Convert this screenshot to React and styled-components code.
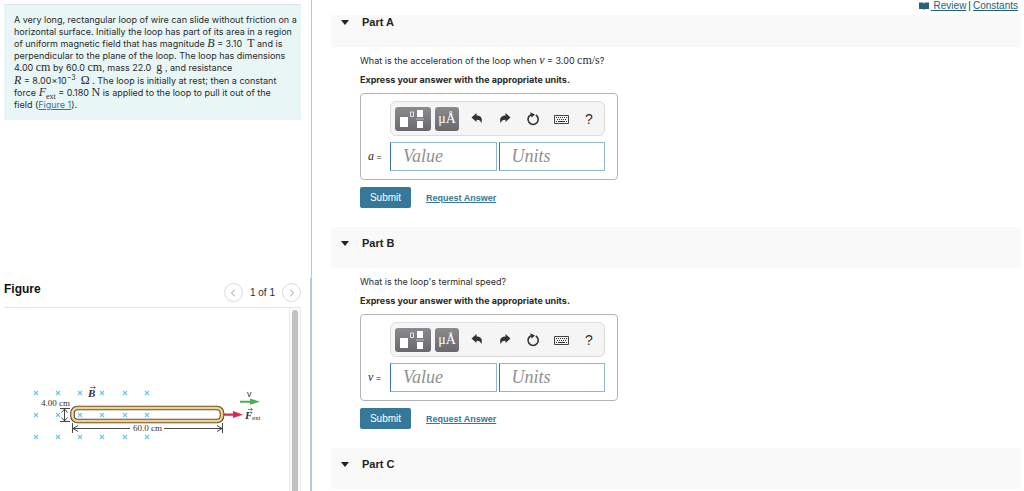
import React from "react";
import styled, { createGlobalStyle } from "styled-components";
import { ChevronLeft, ChevronRight } from "lucide-react";

const GlobalStyle = createGlobalStyle`
  * {
    box-sizing: border-box;
  }
  body {
    margin: 0;
    background: #fff;
    color: #2a2a2a;
    font-family: "Liberation Sans", Arial, sans-serif;
    font-size: 9px;
  }
`;

const Page = styled.div`
  display: flex;
  height: 100vh;
  overflow: hidden;
`;

const Sidebar = styled.aside`
  display: flex;
  flex-direction: column;
  flex: 0 0 312px;
  min-width: 0;
`;

const ProblemPane = styled.div`
  flex: 1;
  padding: 4px 10px 0 4px;
  border-right: 1px solid #bfc6d0;
`;

const Problem = styled.div`
  padding: 9px 0 9px 10px;
  background: #e8f6f6;
  border-top: 1px solid #dde5e5;
  font-family: Inter, "Liberation Sans", sans-serif;
  line-height: 12px;
  white-space: nowrap;
`;

const Math = styled.span`
  font-family: "Liberation Serif", "Times New Roman", serif;
  font-size: 12px;
  line-height: 10px;
  font-style: ${({ $italic }) => ($italic ? "italic" : "normal")};
`;

const Sup = styled.sup`
  font-size: 7px;
  line-height: 7px;
`;

const Sub = styled.sub`
  font-family: "Liberation Serif", "Times New Roman", serif;
  font-size: 8px;
  line-height: 0;
`;

const Link = styled.a`
  color: #367899;
  text-decoration: underline;
  font-weight: ${({ $bold }) => ($bold ? "bold" : "normal")};
`;

const FigurePane = styled.section`
  display: flex;
  flex-direction: column;
  flex: 0 0 213px;
  padding: 0 9px 0 4px;
  border-right: 2px solid #b9cadf;
`;

const FigureHeader = styled.header`
  display: flex;
  align-items: center;
  height: 30px;
  border-bottom: 1px solid #e6e6e6;
`;

const FigureTitle = styled.h2`
  flex: 1;
  margin: 0;
  padding-bottom: 7px;
  color: #111;
  font-size: 12px;
`;

const Pager = styled.div`
  display: flex;
  align-items: center;
  gap: 7px;
  font-size: 10px;
`;

const PagerButton = styled.button`
  display: flex;
  align-items: center;
  justify-content: center;
  width: 19px;
  height: 19px;
  padding: 0;
  border: 1px solid #dcdcdc;
  border-radius: 50%;
  background: #fff;
  color: #999;
`;

const FigureBody = styled.div`
  display: flex;
  justify-content: space-between;
  flex: 1;
  min-height: 0;
`;

const ScrollTrack = styled.div`
  flex: 0 0 11px;
  padding: 2px 2px 0;
  border-left: 1px solid #e8e8e8;
  border-right: 1px solid #ececec;
  background: #fafafa;
`;

const ScrollThumb = styled.div`
  width: 6px;
  height: 100%;
  border-radius: 3px 3px 0 0;
  background: #c1c1c1;
`;

const Main = styled.main`
  flex: 1;
  min-width: 0;
  padding: 0 3px 0 19px;
`;

const TopBar = styled.nav`
  display: flex;
  align-items: center;
  justify-content: flex-end;
  height: 15px;
  padding: 0 3px 4px 0;
  gap: 2px;
  font-size: 10px;

  a {
    color: #26607a;
  }
`;

const PartHeader = styled.header`
  display: flex;
  align-items: center;
  gap: 13px;
  height: ${({ $first }) => ($first ? "32px" : "41px")};
  padding: 0 10px ${({ $first }) => ($first ? "17px" : "8px")};
  background: #f9f9f9;
`;

const Caret = styled.span`
  border: 4px solid transparent;
  border-top: 5px solid #222;
  border-bottom: 0;
`;

const PartTitle = styled.h3`
  margin: 0;
  color: #222;
  font-size: 11px;
  line-height: 13px;
`;

const PartBody = styled.form`
  padding: 4px 0 19px 29px;
`;

const Question = styled.p`
  margin: 0;
  font-family: Inter, "Liberation Sans", sans-serif;
  line-height: 19px;
  font-weight: ${({ $bold }) => ($bold ? "bold" : "normal")};
`;

const AnswerBox = styled.div`
  display: flex;
  flex-direction: column;
  gap: 6px;
  width: 258px;
  height: 87px;
  margin-top: 4px;
  padding: 7px 12px 8px 7px;
  border: 1px solid #b4b4b4;
  border-radius: 4px;
`;

const Toolbar = styled.div`
  display: flex;
  align-items: center;
  height: 35px;
  margin-left: 22px;
  padding: 0 4px;
  border: 1px solid #dcdcdc;
  border-radius: 6px;
  background: #f5f5f5;
`;

const TemplateButton = styled.button`
  display: flex;
  align-items: center;
  justify-content: center;
  flex: 0 0 ${({ $wide }) => ($wide ? "36px" : "24px")};
  height: 24px;
  margin-right: 4px;
  padding: 0;
  border: 0;
  border-radius: 3px;
  background: linear-gradient(#8b8b8f, #69696d);
  color: #fff;
  font-family: "Liberation Serif", serif;
  font-size: 14px;
`;

const IconButton = styled.button`
  display: flex;
  align-items: center;
  justify-content: center;
  flex: 0 0 28px;
  height: 24px;
  padding: 0;
  border: 0;
  background: none;
  color: #333;
  font-family: "Liberation Sans", Arial, sans-serif;
  font-size: 14px;
`;

const Fields = styled.div`
  display: flex;
  align-items: center;
  gap: 2px;
`;

const Label = styled.label`
  width: 20px;
  white-space: nowrap;
`;

const Field = styled.input`
  flex: 1;
  min-width: 0;
  height: 29px;
  padding: 0 12px;
  border: 1px solid #8fb8ca;
  border-left-color: #367899;
  outline: 0;
  border-radius: 0;
  background: #fff;
  font-family: "Liberation Serif", "Times New Roman", serif;
  font-size: 18px;
  font-style: italic;

  &::placeholder {
    color: #909090;
  }
`;

const Actions = styled.div`
  display: flex;
  align-items: center;
  gap: 15px;
  margin-top: 7px;
`;

const Submit = styled.button`
  width: 51px;
  height: 21px;
  padding: 0;
  border: 0;
  border-radius: 2px;
  background: #367899;
  color: #fff;
  font-family: "Liberation Sans", Arial, sans-serif;
  font-size: 10px;
`;

const BookIcon = () => (
  <svg width="10" height="8" viewBox="0 0 10 8" fill="#26607a">
    <path d="M0 0.5h4.5v6.5H0zM5.5 0.5H10v6.5H5.5zM4.5 1.5h1V8h-1z" />
  </svg>
);

const FractionIcon = () => (
  <svg width="26" height="18" viewBox="0 0 26 18">
    <path d="M0 7h8v10H0zM17 0h6v7h-6zM17 11h6v7h-6z" fill="#fff" />
    <path d="M10.500 2h3v4.500h-3z" fill="none" stroke="#e4e4e4" />
    <path d="M16 9h8" stroke="#bdbdbd" />
  </svg>
);

const ArrowIcon = ({ flip }) => (
  <svg width="12" height="11" viewBox="0 0 12 11" fill="currentColor">
    <path
      transform={flip ? "translate(12 0) scale(-1 1)" : undefined}
      d="M0.500 4.500L5.500 0V2.500C9.800 2.500 12 5 10.300 10.300C9.700 7.800 8.500 6.700 5.500 6.700V9Z"
    />
  </svg>
);

const ResetIcon = () => (
  <svg width="14" height="14" viewBox="0 0 14 14">
    <path d="M9.800 3A5.100 5.100 0 1 1 5 2.700" fill="none" stroke="currentColor" strokeWidth="1.600" />
    <path d="M4.200 0.300L9 2.400L5.600 5.400Z" fill="currentColor" />
  </svg>
);

const KeyboardIcon = () => (
  <svg width="15" height="10" viewBox="0 0 15 10" fill="none" stroke="currentColor">
    <path d="M0.500 1.500h14v8H0.500z" stroke="#444" />
    <path d="M2 3.500h11M3 5.500h10" strokeDasharray="1 1" />
    <path d="M2 7.500h1M4 7.500h7M12 7.500h1" />
  </svg>
);

const FigureText = styled.text`
  font-family: "Liberation Serif", "Times New Roman", serif;
  font-size: ${({ $italic }) => ($italic ? "11px" : "9px")};
  font-style: ${({ $italic }) => ($italic ? "italic" : "normal")};
  font-weight: ${({ $italic }) => ($italic ? "bold" : "normal")};
  fill: #333;
`;

const SmallText = styled(FigureText)`
  font-size: 7px;
`;

const SansText = styled(FigureText)`
  font-family: "Liberation Sans", Arial, sans-serif;
`;

const crossColumns = [36, 58, 80, 102, 125, 147];
const crossRows = [393, 415, 437];

const LoopFigure = () => (
  <svg width="270" height="183" viewBox="4 308 270 183" role="img" aria-label="Wire loop in a magnetic field">
    {crossRows.map((y) =>
      crossColumns.map((x) => (
        <path
          key={`${x}-${y}`}
          d={`M${x - 2} ${y - 2}l4 4m0-4l-4 4`}
          stroke="#6fc5ea"
          strokeWidth="1.100"
        />
      ))
    )}
    <g fill="none">
      <rect x="72.500" y="408" width="149.500" height="13" rx="5" stroke="#44403b" strokeWidth="4.600" />
      <rect x="72.500" y="408" width="149.500" height="13" rx="5" stroke="#d9a95a" strokeWidth="2.900" />
      <rect x="72.500" y="408" width="149.500" height="13" rx="5" stroke="#f7dd9c" strokeWidth="1.500" />
    </g>
    <g fill="none" stroke="#333" strokeWidth="0.900">
      <path d="M60 408.500h10M60 421.500h10M64.500 409v12M61.500 412.500l3-3.500l3 3.500M61.500 417.500l3 3.500l3-3.500" />
      <path d="M72.500 423v10M222.500 423v10M73 428.500h57M164 428.500h58M78 425.500l-5 3l5 3M217 425.500l5 3l-5 3" />
      <path d="M90 387.500h5M93.500 386l2 1.500l-2 1.500M248 409.500h4M250.500 408l2 1.500l-2 1.500" strokeWidth="0.600" />
    </g>
    <path d="M240 400.800h10v-2.300l10 3.300l-10 3v-2h-10z" fill="#4caf50" />
    <path d="M224 413.500h9v-2.500l10 3.800l-10 3.200v-2.300h-9z" fill="#e0264d" />
    <FigureText x="41" y="406">4.00 cm</FigureText>
    <FigureText x="133" y="431">60.0 cm</FigureText>
    <FigureText x="88" y="397" $italic>B</FigureText>
    <SansText x="247" y="397">v</SansText>
    <FigureText x="245" y="419" $italic>F</FigureText>
    <SmallText x="252" y="420">ext</SmallText>
  </svg>
);

const Part = ({ id, variable, first, children }) => (
  <section>
    <PartHeader $first={first}>
      <Caret />
      <PartTitle>Part {id}</PartTitle>
    </PartHeader>
    {children && (
      <PartBody onSubmit={(e) => e.preventDefault()}>
        <Question>{children}</Question>
        <Question $bold>Express your answer with the appropriate units.</Question>
        <AnswerBox>
          <Toolbar>
            <TemplateButton type="button" $wide aria-label="Templates">
              <FractionIcon />
            </TemplateButton>
            <TemplateButton type="button">μÅ</TemplateButton>
            <IconButton type="button" aria-label="Undo">
              <ArrowIcon />
            </IconButton>
            <IconButton type="button" aria-label="Redo">
              <ArrowIcon flip />
            </IconButton>
            <IconButton type="button" aria-label="Reset">
              <ResetIcon />
            </IconButton>
            <IconButton type="button" aria-label="Keyboard">
              <KeyboardIcon />
            </IconButton>
            <IconButton type="button">?</IconButton>
          </Toolbar>
          <Fields>
            <Label htmlFor={`value-${id}`}>
              <Math $italic>{variable}</Math> =
            </Label>
            <Field id={`value-${id}`} placeholder="Value" />
            <Field placeholder="Units" aria-label="Units" />
          </Fields>
        </AnswerBox>
        <Actions>
          <Submit type="submit">Submit</Submit>
          <Link href="#request" $bold>Request Answer</Link>
        </Actions>
      </PartBody>
    )}
  </section>
);

const App = () => {
  return (
    <Page>
      <GlobalStyle />
      <Sidebar>
        <ProblemPane>
          <Problem>
            A very long, rectangular loop of wire can slide without friction on a
            <br />
            horizontal surface. Initially the loop has part of its area in a region
            <br />
            of uniform magnetic field that has magnitude <Math $italic>B</Math> = 3.10 &nbsp;<Math>T</Math> and is
            <br />
            perpendicular to the plane of the loop. The loop has dimensions
            <br />
            4.00 <Math>cm</Math> by 60.0 <Math>cm</Math>, mass 22.0 &nbsp;<Math>g</Math> , and resistance
            <br />
            <Math $italic>R</Math> = 8.00×10<Sup>−3</Sup> &nbsp;<Math>Ω</Math> . The loop is initially at rest; then a constant
            <br />
            force <Math $italic>F</Math><Sub>ext</Sub> = 0.180 <Math>N</Math> is applied to the loop to pull it out of the
            <br />
            field (<Link href="#figure">Figure 1</Link>).
          </Problem>
        </ProblemPane>
        <FigurePane id="figure">
          <FigureHeader>
            <FigureTitle>Figure</FigureTitle>
            <Pager>
              <PagerButton aria-label="Previous figure">
                <ChevronLeft size={12} strokeWidth={2} />
              </PagerButton>
              1 of 1
              <PagerButton aria-label="Next figure">
                <ChevronRight size={12} strokeWidth={2} />
              </PagerButton>
            </Pager>
          </FigureHeader>
          <FigureBody>
            <LoopFigure />
            <ScrollTrack>
              <ScrollThumb />
            </ScrollTrack>
          </FigureBody>
        </FigurePane>
      </Sidebar>
      <Main>
        <TopBar>
          <BookIcon />
          <Link href="#review">&nbsp;Review</Link>|
          <Link href="#constants">Constants</Link>
        </TopBar>
        <Part id="A" variable="a" first>
          What is the acceleration of the loop when <Math $italic>v</Math> = 3.00 <Math>cm/s</Math>?
        </Part>
        <Part id="B" variable="v">
          What is the loop's terminal speed?
        </Part>
        <Part id="C" />
      </Main>
    </Page>
  );
};

export default App;
